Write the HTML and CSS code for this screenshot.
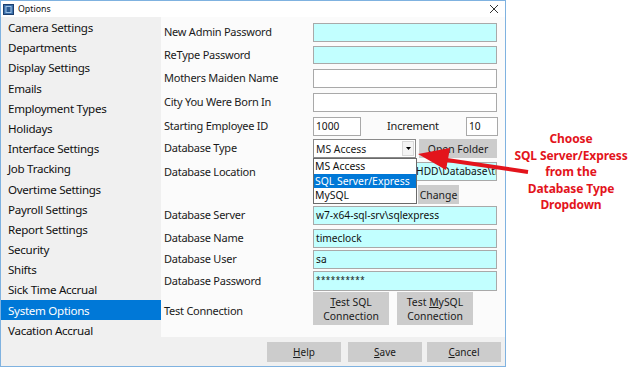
FILE: index.html
```html
<!DOCTYPE html>
<html>
<head>
<meta charset="utf-8">
<link rel="stylesheet" href="styles.css">
</head>
<body>
<div class="window">
  <div class="titlebar">
    <svg class="appicon" width="11" height="11" viewBox="0 0 11 11">
      <rect x="0.5" y="0.5" width="10" height="10" fill="#3a6ea8" stroke="#1d3f6e"/>
      <rect x="2.5" y="2" width="6" height="7" fill="#9fc3e8"/>
      <rect x="3.5" y="3" width="4" height="5" fill="#2b5c95"/>
    </svg>
    <span class="title">Options</span>
    <svg class="close" width="10" height="10" viewBox="0 0 10 10">
      <path d="M1 1 L9 9 M9 1 L1 9" stroke="#333" stroke-width="1"/>
    </svg>
  </div>
  <div class="main">
    <ul class="sidebar">
      <li>Camera Settings</li>
      <li>Departments</li>
      <li>Display Settings</li>
      <li>Emails</li>
      <li>Employment Types</li>
      <li>Holidays</li>
      <li>Interface Settings</li>
      <li>Job Tracking</li>
      <li>Overtime Settings</li>
      <li>Payroll Settings</li>
      <li>Report Settings</li>
      <li>Security</li>
      <li>Shifts</li>
      <li>Sick Time Accrual</li>
      <li class="selected">System Options</li>
      <li>Vacation Accrual</li>
    </ul>
    <div class="content">
      <div class="row r1"><span class="label">New Admin Password</span><div class="field cyan wide"></div></div>
      <div class="row r2"><span class="label">ReType Password</span><div class="field cyan wide"></div></div>
      <div class="row r3"><span class="label">Mothers Maiden Name</span><div class="field wide"></div></div>
      <div class="row r3"><span class="label">City You Were Born In</span><div class="field wide"></div></div>
      <div class="row r3">
        <span class="label">Starting Employee ID</span>
        <div class="field small">1000</div>
        <span class="inc">Increment</span>
        <div class="field tiny">10</div>
      </div>
      <div class="row r6">
        <span class="label">Database Type</span>
        <div class="select">
          <span class="seltext">MS Access</span>
          <span class="selbtn"><svg width="5" height="3" viewBox="0 0 5 3"><path d="M0 0 H5 L2.5 3 Z" fill="#000"/></svg></span>
          <ul class="droplist">
            <li>MS Access</li>
            <li class="hl">SQL Server/Express</li>
            <li>MySQL</li>
          </ul>
        </div>
        <div class="btn openfolder"><u>O</u>pen Folder</div>
      </div>
      <div class="locrow">
        <span class="label loclabel">Database Location</span>
        <div class="locright">
          <div class="field cyan wide loc"><span class="loctext">C:\Program Files\TC\HDD\Database\timeclock.mdb</span></div>
          <div class="changerow">
            <div class="btn hidbtn"></div>
            <div class="btn change">Change</div>
          </div>
        </div>
      </div>
      <div class="row r9"><span class="label">Database Server</span><div class="field cyan wide">w7-x64-sql-srv\sqlexpress</div></div>
      <div class="row r10"><span class="label">Database Name</span><div class="field cyan wide">timeclock</div></div>
      <div class="row tight"><span class="label">Database User</span><div class="field cyan wide">sa</div></div>
      <div class="row tight r12"><span class="label">Database Password</span><div class="field cyan wide pw">**********</div></div>
      <div class="testrow">
        <span class="label">Test Connection</span>
        <div class="btn test"><span><u>T</u>est SQL</span><span>Connection</span></div>
        <div class="btn test"><span>Test <u>M</u>ySQL</span><span>Connection</span></div>
      </div>
    </div>
  </div>
  <div class="footer">
    <div class="btn fbtn"><u>H</u>elp</div>
    <div class="btn fbtn save"><u>S</u>ave</div>
    <div class="btn fbtn cancel"><u>C</u>ancel</div>
  </div>
</div>
<div class="note">Choose<br>SQL Server/Express<br>from the<br>Database Type<br>Dropdown</div>
<svg class="arrow" width="120" height="34" viewBox="410 142 120 34">
  <line x1="440" y1="159" x2="528" y2="172" stroke="#e3141c" stroke-width="4"/>
  <polygon points="418,154 450,148 446,170" fill="#e3141c"/>
</svg>
</body>
</html>
```
FILE: styles.css
```css
* { box-sizing: border-box; }
html, body { margin: 0; padding: 0; }
body {
  width: 640px;
  height: 367px;
  background: #ffffff;
  font-family: "Noto Sans", "Open Sans", sans-serif;
  color: #1a1a1a;
  position: relative;
  overflow: hidden;
}
.window {
  width: 506px;
  height: 367px;
  border: 1px solid #7fb2e0;
  display: flex;
  flex-direction: column;
  background: #fff;
}
.titlebar {
  height: 16px;
  display: flex;
  align-items: center;
  padding-left: 2px;
  background: #fff;
  flex: none;
}
.appicon { display: block; }
.title {
  font-size: 8.8px;
  margin-left: 4px;
  color: #111;
}
.close { margin-left: auto; margin-right: 6px; display: block; }
.main {
  height: 320px;
  display: flex;
  flex: none;
}
.sidebar {
  list-style: none;
  margin: 0;
  padding: 0;
  width: 160px;
  background: #f0f0f0;
  flex: none;
}
.sidebar li {
  height: 20.2px;
  line-height: 21px;
  padding-left: 7px;
  font-size: 11.6px;
  color: #111;
  white-space: nowrap;
  letter-spacing: -0.3px;
}
.sidebar li.selected {
  background: #0078d7;
  color: #fff;
}
.content {
  flex: 1;
  background: #fbfbfb;
  padding: 6px 0 0 3px;
  display: flex;
  flex-direction: column;
}
.label {
  width: 149px;
  flex: none;
  font-size: 11px;
  color: #1a1a1a;
  white-space: nowrap;
  letter-spacing: -0.25px;
  margin-top: -2px;
}
.row {
  height: 19px;
  display: flex;
  align-items: center;
  margin-top: 4px;
}
.row.r1 { margin-top: 0; }
.row.r2 { height: 18px; }
.row.r3 { margin-top: 5px; }
.row.r6 { margin-top: 3px; }
.row.r9 { margin-top: 2px; }
.row.r10 { margin-top: 4px; }
.row.tight { margin-top: 2px; }
.row.r12 { height: 20px; }
.field {
  height: 100%;
  border: 1px solid #a9a9a9;
  background: #fff;
  font-size: 10.2px;
  line-height: 17px;
  padding-left: 2px;
  white-space: nowrap;
  overflow: hidden;
  color: #111;
}
.field.cyan { background: #c2ffff; }
.field.wide { width: 184px; }
.field.small { width: 48px; }
.field.tiny { width: 32px; margin-left: auto; margin-right: 7px; }
.field.pw { font-size: 8px; letter-spacing: 0.5px; line-height: 15px; }
.inc {
  font-size: 11px;
  width: 104px;
  text-align: center;
  margin-top: -3px;
  letter-spacing: -0.2px;
}
.select {
  position: relative;
  width: 103px;
  height: 19px;
  border: 1px solid #8a8a8a;
  background: #fff;
  display: flex;
  align-items: center;
}
.seltext {
  font-size: 10.4px;
  padding-left: 2px;
  flex: 1;
}
.selbtn {
  width: 12px;
  height: 15px;
  margin-right: 1px;
  border: 1px solid #d8d8d8;
  background: #f4f4f4;
  display: flex;
  align-items: center;
  justify-content: center;
}
.selbtn svg { display: block; }
.droplist {
  position: absolute;
  top: 18px;
  left: -1px;
  width: 104px;
  margin: 0;
  padding: 0;
  list-style: none;
  background: #fff;
  border: 1px solid #6a6a6a;
  z-index: 5;
}
.droplist li {
  height: 14.6px;
  line-height: 15px;
  font-size: 10.4px;
  padding-left: 1px;
  color: #111;
  white-space: nowrap;
}
.droplist li.hl { background: #0078d7; color: #fff; }
.btn {
  background: #cccccc;
  font-size: 10.4px;
  color: #1a1a1a;
  display: flex;
  align-items: center;
  justify-content: center;
  white-space: nowrap;
}
.openfolder {
  width: 78px;
  height: 19px;
  margin-left: 3px;
}
.locrow {
  display: flex;
  align-items: flex-start;
  margin-top: 4px;
}
.loclabel {
  line-height: 19px;
  margin-top: 0;
}
.locright {
  display: flex;
  flex-direction: column;
}
.loc { height: 19px; }
.loctext { margin-left: 2px; }
.changerow {
  height: 19px;
  margin-top: 4px;
  display: flex;
}
.hidbtn { width: 47px; margin-left: 42px; }
.change { width: 41px; margin-left: 16px; }
.testrow {
  height: 33px;
  margin-top: 1px;
  display: flex;
  align-items: center;
}
.testrow .label { margin-top: 4px; }
.btn.test {
  width: 76px;
  height: 33px;
  flex-direction: column;
  line-height: 14px;
  margin-right: 8px;
}
.footer {
  flex: 1;
  background: #f0f0f0;
  display: flex;
  justify-content: flex-end;
  align-items: flex-start;
  padding-top: 5px;
  padding-right: 4px;
}
.fbtn {
  width: 74px;
  height: 20px;
  font-size: 10px;
}
.fbtn.save { margin-left: 7px; }
.fbtn.cancel { margin-left: 5px; }
.note {
  position: absolute;
  left: 511px;
  top: 131px;
  width: 120px;
  text-align: center;
  color: #e3141c;
  font-weight: bold;
  font-size: 12px;
  line-height: 16.6px;
  letter-spacing: -0.1px;
}
.arrow {
  position: absolute;
  left: 410px;
  top: 142px;
  pointer-events: none;
  z-index: 10;
}
```
